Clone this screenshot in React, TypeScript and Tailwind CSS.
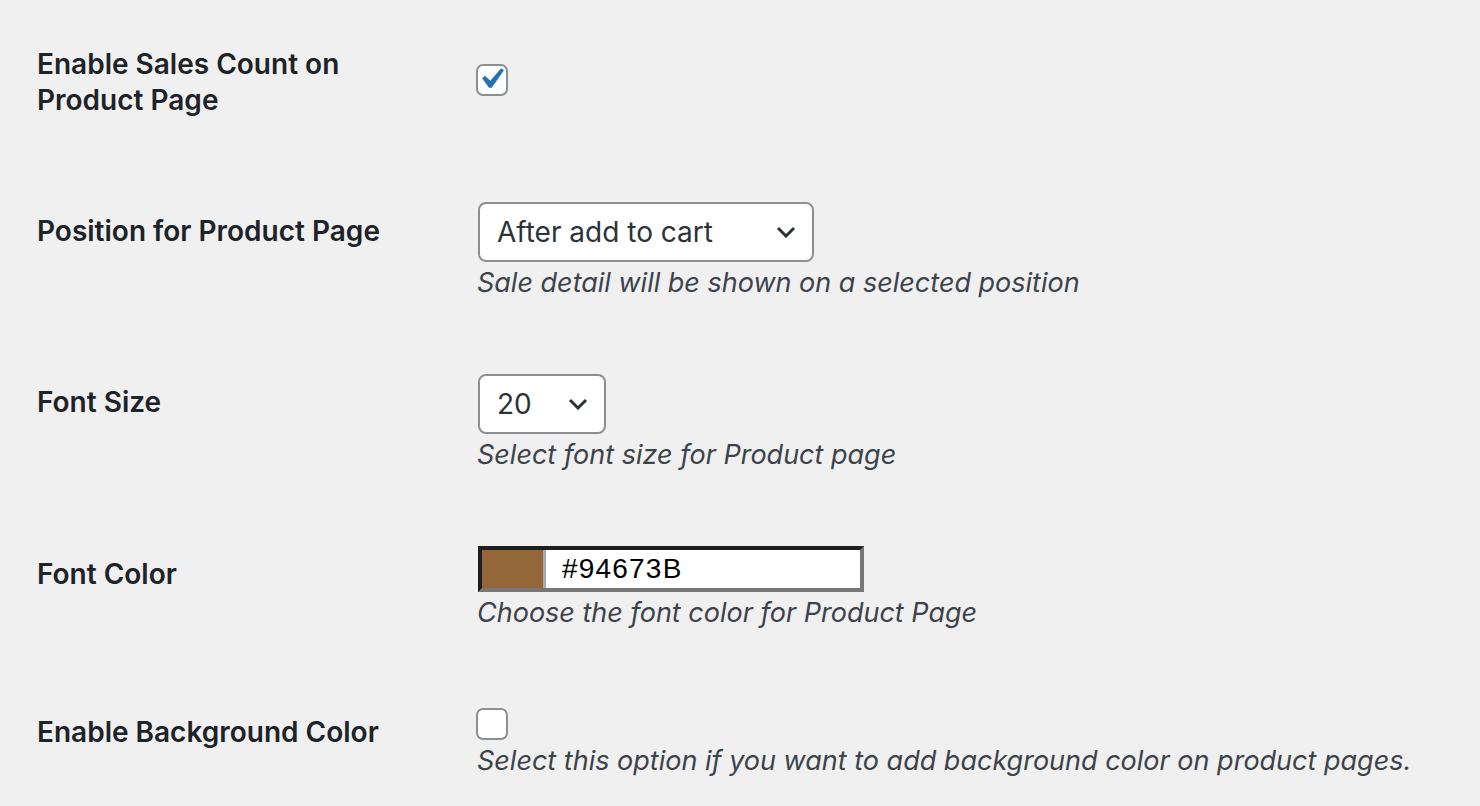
import React from "react";

const font = { fontFamily: "Inter, 'Noto Sans', sans-serif" };

const Chevron = () => (
    <svg width="20" height="12" viewBox="0 0 20 12" fill="none" className="shrink-0">
        <path d="M2 2l8 8 8-8" stroke="#2c3338" strokeWidth="3" />
    </svg>
);

const Checkbox = ({ checked }: { checked?: boolean }) => (
    <div className="relative w-[32px] h-[32px] -ml-[2px] rounded-[7px] border-2 border-[#8c8f94] bg-white">
        {checked && (
            <svg
                className="absolute left-[-8px] top-[-8px]"
                width="42"
                height="42"
                viewBox="0 0 20 20"
            >
                <path d="M14.83 4.89l1.34.94-5.81 8.38H9.02L5.78 9.67l1.34-1.25 2.57 2.4z" fill="#2271b1" />
            </svg>
        )}
    </div>
);

const Select = ({ value, width }: { value: string; width: string }) => (
    <div
        className={`flex items-center justify-between h-[60px] ${width} rounded-[8px] border-2 border-[#8c8f94] bg-white pl-[17px] pr-[16px] text-[28px] text-[#2c3338]`}
    >
        <span className="leading-none">{value}</span>
        <Chevron />
    </div>
);

const Description = ({ children }: { children: React.ReactNode }) => (
    <p className="mt-[4px] -ml-[1px] text-[27px] leading-[34px] italic text-[#3c434a] whitespace-nowrap">{children}</p>
);

const Label = ({ children, pt }: { children: React.ReactNode; pt: string }) => (
    <div className={`w-[441px] shrink-0 -ml-[1px] ${pt} text-[28px] leading-[36px] font-semibold text-[#1d2327]`}>
        {children}
    </div>
);

export default function App() {
    return (
        <div className="min-h-screen w-full bg-[#f0f0f1] pl-[38px]" style={font}>
            <div className="flex h-[172px]">
                <Label pt="pt-[46px]">
                    Enable Sales Count on
                    <br />
                    Product Page
                </Label>
                <div className="pt-[64px]">
                    <Checkbox checked />
                </div>
            </div>

            <div className="flex h-[172px]">
                <Label pt="pt-[41px]">Position for Product Page</Label>
                <div className="pt-[30px]">
                    <Select value="After add to cart" width="w-[336px]" />
                    <Description>Sale detail will be shown on a selected position</Description>
                </div>
            </div>

            <div className="flex h-[172px]">
                <Label pt="pt-[40px]">Font Size</Label>
                <div className="pt-[30px]">
                    <Select value="20" width="w-[128px]" />
                    <Description>Select font size for Product page</Description>
                </div>
            </div>

            <div className="flex h-[162px]">
                <Label pt="pt-[40px]">Font Color</Label>
                <div className="pt-[30px]">
                    <div className="flex h-[46px] w-[386px] border-4 border-t-[#1e1e1e] border-l-[#1e1e1e] border-b-[#777777] border-r-[#777777]">
                        <div className="w-[61px] bg-[#94673b]" />
                        <div
                            className="flex-1 flex items-center bg-white border-l-[3px] border-[#a9a9a9] pl-[16px] text-[28px] text-black tracking-[1.2px]"
                            style={{ fontFamily: "'Liberation Sans', Arial, sans-serif" }}
                        >
                            #94673B
                        </div>
                    </div>
                    <Description>Choose the font color for Product Page</Description>
                </div>
            </div>

            <div className="flex h-[128px]">
                <Label pt="pt-[36px]">Enable Background Color</Label>
                <div className="pt-[30px]">
                    <Checkbox />
                    <Description>Select this option if you want to add background color on product pages.</Description>
                </div>
            </div>
        </div>
    );
}
